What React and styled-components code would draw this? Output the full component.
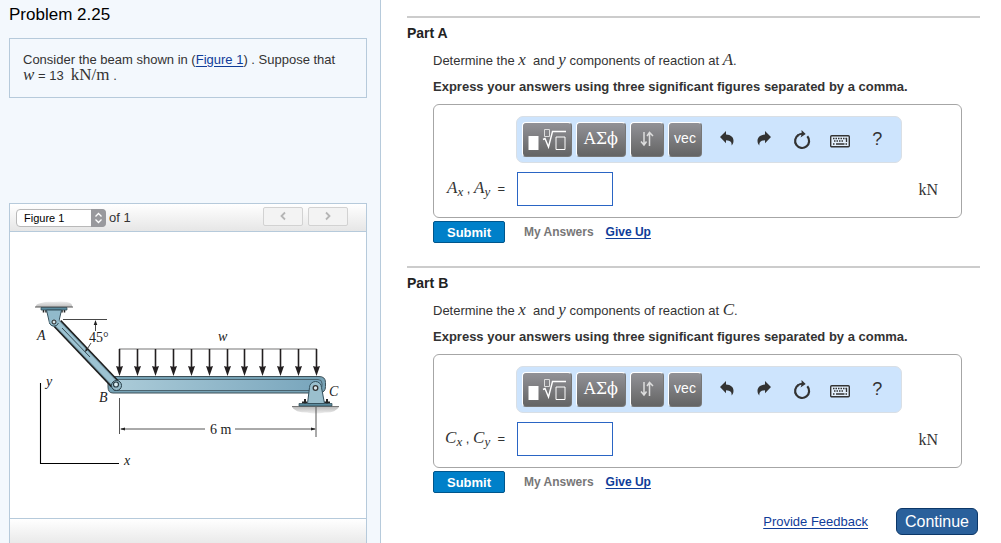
import React from 'react'
import styled, { createGlobalStyle } from 'styled-components'

const sans = `"Liberation Sans", Arial, sans-serif`
const serif = `"Liberation Serif", "Times New Roman", serif`
const lineColor = '#b6cadb'
const linkColor = '#0f3c99'

const GlobalStyle = createGlobalStyle`
	* {
		box-sizing: border-box;
	}
	body {
		margin: 0;
		background: #fff;
		color: #333;
		font-family: ${sans};
		font-size: 13px;
		line-height: 16px;
	}
	h1, h2, p {
		margin: 0;
	}
`

const Page = styled.div`
	display: grid;
	grid-template-columns: 381fr 620fr;
	height: 100vh;
	overflow: hidden;
`

const Side = styled.aside`
	display: flex;
	flex-direction: column;
	min-height: 0;
	padding: 5px 13px 0 9px;
	background: #f3f8fd;
	border-right: 1px solid ${lineColor};
`

const Title = styled.h1`
	color: #000;
	font-size: 17px;
	font-weight: 400;
	line-height: 20px;
`

const Intro = styled.section`
	min-height: 60px;
	margin: 13px 0 105px;
	padding: 13px;
	border: 1px solid ${lineColor};
`

const Link = styled.a`
	color: ${linkColor};
	font-weight: ${p => p.$bold ? 700 : 400};
	text-decoration: underline;
	text-underline-offset: 2px;
`

const Math = styled.span`
	font-family: ${serif};
	font-size: ${p => p.$size || 17}px;
	font-style: ${p => p.$upright ? 'normal' : 'italic'};
	line-height: 1px;
`

const Sub = styled.sub`
	font-size: 13px;
	line-height: 1px;
	vertical-align: -3px;
`

const Figure = styled.section`
	display: flex;
	flex: 1;
	flex-direction: column;
	min-height: 0;
	border: 1px solid ${lineColor};
	border-bottom: 0;
	background: #fff;
`

const FigureBar = styled.div`
	display: flex;
	align-items: center;
	flex: none;
	height: 28px;
	padding: 0 18px 0 6px;
	background: linear-gradient(#fff, #e6e6e6);
	border-bottom: 1px solid ${lineColor};
`

const FigureFoot = styled.div`
	flex: 1;
	min-height: 24px;
	background: linear-gradient(#fff, #e6e6e6 28px);
	border-top: 1px solid ${lineColor};
`

const Picker = styled.label`
	position: relative;
	display: flex;
	margin-right: 3px;
	svg {
		position: absolute;
		top: 0;
		right: 0;
		pointer-events: none;
	}
`

const Select = styled.select`
	appearance: none;
	width: 90px;
	height: 18px;
	padding: 0 20px 0 7px;
	border: 1px solid #b9b9b9;
	border-radius: 4px;
	background: #fff;
	color: #000;
	font: 11px ${sans};
`

const PagerGroup = styled.div`
	display: flex;
	gap: 5px;
	margin: 0 0 3px auto;
`

const PagerButton = styled.button`
	display: flex;
	align-items: center;
	justify-content: center;
	width: 40px;
	height: 19px;
	padding: 0;
	border: 1px solid #d2d2d2;
	border-radius: 2px;
	background: #f3f3f3;
`

const Drawing = styled.svg`
	display: block;
	flex: none;
	width: 100%;
	font-family: ${serif};
`

const Main = styled.main`
	min-width: 0;
	padding: 16px 21px 0 26px;
`

const PartSection = styled.section`
	height: 250px;
	padding-top: 6px;
	border-top: 2px solid #ccc;
`

const PartTitle = styled.h2`
	color: #222;
	font-size: 14px;
	line-height: 18px;
`

const PartBody = styled.div`
	padding: 11px 18px 0 26px;
`

const Text = styled.p`
	margin-bottom: ${p => p.$bold ? 9 : 10}px;
	font-weight: ${p => p.$bold ? 700 : 400};
`

const AnswerBox = styled.div`
	display: grid;
	grid-template-columns: 71px 1fr auto;
	column-gap: 12px;
	row-gap: 9px;
	align-items: center;
	height: 114px;
	padding: 11px 23px 11px 0;
	border: 1px solid #a6a6a6;
	border-radius: 6px;
`

const Toolbar = styled.div`
	display: flex;
	align-items: center;
	grid-column: 2 / 4;
	justify-self: start;
	width: 386px;
	height: 47px;
	margin-left: -1px;
	padding: 0 5px;
	border: 1px solid #d9dfe5;
	border-radius: 7px;
	background: #cde4fd;
`

const ToolGroup = styled.div`
	display: flex;
	gap: 4px;
	margin-right: 6px;
`

const ToolButton = styled.button`
	display: flex;
	align-items: center;
	justify-content: center;
	width: ${p => p.$wide ? 50 : 34}px;
	height: 35px;
	padding: 0 0 3px;
	border: 1px solid #fff;
	border-right-color: #777;
	border-bottom-color: #777;
	border-radius: 4px;
	background: linear-gradient(#929297, #646464);
	color: #fff;
	font-family: ${p => p.$serif ? `"DejaVu Serif", ${serif}` : sans};
	font-size: ${p => p.$serif ? 16 : 14}px;
`

const IconButton = styled.button`
	display: flex;
	align-items: center;
	justify-content: center;
	width: 38px;
	height: 34px;
	padding: 0;
	border: 0;
	background: none;
	color: #333;
	font: 18px ${sans};
`

const AnswerLabel = styled.label`
	text-align: right;
	white-space: nowrap;
`

const AnswerInput = styled.input`
	width: 96px;
	height: 34px;
	border: 1px solid #2a65c4;
	background: #fff;
	font: 14px ${sans};
`

const Actions = styled.div`
	display: flex;
	align-items: center;
	margin-top: 3px;
	font-size: 12px;
`

const Submit = styled.button`
	width: 72px;
	height: 22px;
	margin-right: 19px;
	padding: 0;
	border: 1px solid #00568c;
	border-radius: 2px;
	background: #0080c9;
	color: #fff;
	font: bold 13px ${sans};
`

const Muted = styled.span`
	margin-right: 12px;
	color: #777;
	font-weight: 700;
`

const Footer = styled.footer`
	display: flex;
	align-items: center;
	justify-content: flex-end;
	gap: 28px;
	margin: -8px 2px 0 0;
`

const Continue = styled.button`
	width: 82px;
	height: 27px;
	padding: 0;
	border: 1px solid #0c3768;
	border-radius: 6px;
	background: #2a609b;
	color: #fff;
	font: 16px ${sans};
`

const RootIcon = () => (
	<svg width="38" height="24" viewBox="0 0 38 24" fill="none" stroke="#fff">
		<path d="M.5 10h10v14H.5z" fill="#fff" stroke="none" />
		<path d="M16.500 3.500h5v7h-5z" stroke="#ddd" />
		<path d="M15 13.500l2-1 3.500 8.500 4-15.500H38" strokeWidth="1.400" />
		<path d="M28 11h9v12.500h-9z" />
	</svg>
)

const UpDownIcon = () => (
	<svg width="14" height="18" viewBox="0 0 14 18" fill="none" stroke="#ddd" strokeWidth="1.500">
		<path d="M4 3v13M1 12.500L4 16l2.500-3.500M9.500 17V4M7 7l2.500-3.500L13 7" />
	</svg>
)

const UndoIcon = ({ redo }) => (
	<svg width="16" height="20" viewBox="0 0 16 20" fill="#333">
		<path
			transform={redo ? 'matrix(-1 0 0 1 16 0)' : undefined}
			d="M1 7L7 1v3.600c5 .2 7.500 2.800 7.500 6.200 0 2-.7 3.600-1.900 4.800.4-3.200-.9-5.200-5.600-5.400v3z"
		/>
	</svg>
)

const ResetIcon = () => (
	<svg width="18" height="20" viewBox="0 0 18 20">
		<path d="M5.500 5A7 7 0 1 0 14.300 6.300" fill="none" stroke="#333" strokeWidth="2.200" />
		<path d="M8.500 0l4.200 4-5.200 3.600c1.200-2.700 1.300-5 1-7.600z" fill="#333" />
		<path d="M5 5.300Q7 3.700 10 3.800" fill="none" stroke="#333" strokeWidth="2" />
	</svg>
)

const KeyboardIcon = () => (
	<svg width="20" height="16" viewBox="0 0 20 16" fill="none" stroke="#333">
		<rect x=".7" y="3.700" width="18.600" height="11" rx="1" fill="#e3effb" strokeWidth="1.400" />
		<path d="M3 6.500h14M4 9h10" strokeDasharray="1.500 1" strokeWidth="1.300" />
		<path d="M16.500 6v4M3 12h1.500M6 12h8.500M15.500 12H17" strokeWidth="1.300" />
	</svg>
)

const loads = [119, 137, 155, 173, 191, 209, 227, 244, 262, 280, 298, 316]

function BeamFigure() {
	return (
		<Drawing viewBox="10 232 356 286" role="img" aria-label="Beam">
			<defs>
				<linearGradient id="beam" x1="0" x2="1">
					<stop offset="0" stopColor="#abcbd8" />
					<stop offset="1" stopColor="#78a5bc" />
				</linearGradient>
				<linearGradient id="wall" x1="0" x2="0" y1="0" y2="1">
					<stop offset="0" stopColor="#eee" />
					<stop offset="1" stopColor="#bbb" />
				</linearGradient>
				<linearGradient id="ground" x1="0" x2="0" y1="0" y2="1">
					<stop offset="0" stopColor="#bbb" />
					<stop offset="1" stopColor="#eee" />
				</linearGradient>
			</defs>

			{/* beam */}
			<path d="M112 376.500H319q6.500 0 6.500 6v4q0 6-6 6.500H113q-5 0-5-6v-6q0-4.500 4-4.500z" fill="#76a2b5" stroke="#3d5058" />
			<path d="M114 379.500H318q4 0 4 4v2q0 5-6 5H114z" fill="url(#beam)" stroke="#3c525c" strokeWidth=".8" />

			{/* distributed load */}
			<path d="M119 349H317" stroke="#777" strokeWidth="1.200" />
			{loads.map(x => (
				<g key={x}>
					<path d={`M${x + 0.5} 349v18`} stroke="#231f20" strokeWidth="1.600" />
					<path d={`M${x - 3} 366q3.500 1.500 7 0l-3.500 10z`} fill="#231f20" />
				</g>
			))}

			{/* support A */}
			<path d="M36 307q-1-3 5-4 6-2 12-1 8-1 14 0 6 1 5 5z" fill="url(#wall)" />
			<path d="M35 307H73" stroke="#555" />
			<path d="M43.500 309v3.500M46 309v3.500M62 309v3.500M64.500 309v3.500" stroke="#222" strokeWidth="1.500" />
			<path d="M41 307.500h26v2.500H41z" fill="#5b8b9e" stroke="#2d454f" strokeWidth=".7" />
			<path d="M46.500 310h15l-3 13a4.800 4.800 0 0 1-9 0z" fill="#91bacb" stroke="#35505c" />

			{/* link AB */}
			<path d="M57.500 323.500L115 384" stroke="#1c1c1c" strokeWidth="10.500" />
			<path d="M56.500 322.500L117 386" stroke="#7193a1" strokeWidth="7.500" />
			<path d="M56.500 322.500L117 386" stroke="#9dc3d2" strokeWidth="5.500" />
			<path d="M62 328L90 357" stroke="#354c55" strokeWidth="1" />
			<path d="M50 318h8.500v5a4.800 4.800 0 0 1-9 0z" fill="#91bacb" />
			<path d="M49.500 323a4.800 4.800 0 0 0 9 0" fill="none" stroke="#35505c" />
			<circle cx="54" cy="322" r="2" fill="#d5e4ea" stroke="#222" />
			<circle cx="116.500" cy="385.500" r="5" fill="#96bac8" stroke="#293e48" />
			<circle cx="116" cy="384.500" r="2.500" fill="#ddeef3" stroke="#263942" strokeWidth="1.200" />

			{/* 45 degree mark */}
			<path d="M63 319.500H107M95.500 322v9M91 343l-5 8" stroke="#333" strokeWidth=".9" />
			<path d="M95.500 320l-1.800 5h3.600zM85 352l1-4 2.500 1.500z" fill="#222" />

			{/* support C */}
			<path d="M292 407H339q-4 6-14 5.500-10 2-18 0-12 0-15-5.500z" fill="url(#ground)" />
			<path d="M292 406.500H339" stroke="#777" />
			<path d="M302 402.500h5M305 399v5M324 402.500h6M327 399v5" stroke="#252525" strokeWidth="2" />
			<path d="M299 403.500h33v2.500H299z" fill="#5b8b9e" stroke="#2d454f" strokeWidth=".7" />
			<path d="M307.500 403.500l2-16a6 6 0 0 1 12 0l3 16z" fill="#9abfcd" stroke="#34515e" />
			<circle cx="315.500" cy="388" r="2.300" fill="#dce8ec" stroke="#333" strokeWidth="1.300" />

			{/* dimension line */}
			<path d="M119.500 398v36M316 407v30M121 429H205M235 429H315" fill="none" stroke="#555" />
			<path d="M120 429l5-1.500v3zM316 429l-5-1.500v3z" fill="#222" />

			{/* axes */}
			<path d="M40.500 383V463.500H119" fill="none" stroke="#000" strokeWidth="1.100" />

			<g fill="#222" fontSize="14" fontStyle="italic">
				<text x="37" y="340">A</text>
				<text x="99" y="402">B</text>
				<text x="329" y="396">C</text>
				<text x="46" y="386">y</text>
				<text x="124" y="465">x</text>
				<text x="218" y="341">w</text>
			</g>
			<g fill="#222" fontSize="14">
				<text x="89" y="342">45°</text>
				<text x="210" y="434">6 m</text>
			</g>
		</Drawing>
	)
}

function Part({ name, point }) {
	const id = `answer-${name}`
	return (
		<PartSection>
			<PartTitle>Part {name}</PartTitle>
			<PartBody>
				<Text>
					Determine the <Math>x</Math>&nbsp; and <Math>y</Math> components of reaction at <Math>{point}</Math>.
				</Text>
				<Text $bold>Express your answers using three significant figures separated by a comma.</Text>
				<AnswerBox>
					<Toolbar>
						<ToolGroup>
							<ToolButton $wide aria-label="Templates"><RootIcon /></ToolButton>
							<ToolButton $wide $serif>ΑΣϕ</ToolButton>
							<ToolButton aria-label="Arrows"><UpDownIcon /></ToolButton>
							<ToolButton>vec</ToolButton>
						</ToolGroup>
						<IconButton aria-label="Undo"><UndoIcon /></IconButton>
						<IconButton aria-label="Redo"><UndoIcon redo /></IconButton>
						<IconButton aria-label="Reset"><ResetIcon /></IconButton>
						<IconButton aria-label="Keyboard"><KeyboardIcon /></IconButton>
						<IconButton>?</IconButton>
					</Toolbar>
					<AnswerLabel htmlFor={id}>
						<Math>{point}<Sub>x</Sub></Math> , <Math>{point}<Sub>y</Sub></Math>&nbsp; =
					</AnswerLabel>
					<AnswerInput id={id} type="text" />
					<Math $upright $size={16}>kN</Math>
				</AnswerBox>
				<Actions>
					<Submit>Submit</Submit>
					<Muted>My Answers</Muted>
					<Link $bold href="#give-up">Give Up</Link>
				</Actions>
			</PartBody>
		</PartSection>
	)
}

function App() {
	return (
		<Page>
			<GlobalStyle />
			<Side>
				<Title>Problem 2.25</Title>
				<Intro>
					<p>
						Consider the beam shown in (<Link href="#figure">Figure 1</Link>) . Suppose that
						<br />
						<Math>w</Math> = 13 &nbsp;<Math $upright>kN/m</Math> .
					</p>
				</Intro>
				<Figure id="figure">
					<FigureBar>
						<Picker>
							<Select aria-label="Figure">
								<option>Figure 1</option>
							</Select>
							<svg width="15" height="18" viewBox="0 0 15 18">
								<path d="M0 0h11q4 0 4 4v10q0 4-4 4H0z" fill="#99999d" />
								<path d="M4.500 7.500l3-3 3 3M4.500 10.500l3 3 3-3" fill="none" stroke="#fff" strokeWidth="1.300" />
							</svg>
						</Picker>
						<span>of 1</span>
						<PagerGroup>
							<PagerButton aria-label="Previous">
								<svg width="8" height="10" viewBox="0 0 8 10" fill="none" stroke="#b5b5b5" strokeWidth="1.800"><path d="M6 1.500L2.500 5 6 8.500" /></svg>
							</PagerButton>
							<PagerButton aria-label="Next">
								<svg width="8" height="10" viewBox="0 0 8 10" fill="none" stroke="#b5b5b5" strokeWidth="1.800"><path d="M2 1.500L5.500 5 2 8.500" /></svg>
							</PagerButton>
						</PagerGroup>
					</FigureBar>
					<BeamFigure />
					<FigureFoot />
				</Figure>
			</Side>
			<Main>
				<Part name="A" point="A" />
				<Part name="B" point="C" />
				<Footer>
					<Link href="#feedback">Provide Feedback</Link>
					<Continue>Continue</Continue>
				</Footer>
			</Main>
		</Page>
	)
}

export default App
